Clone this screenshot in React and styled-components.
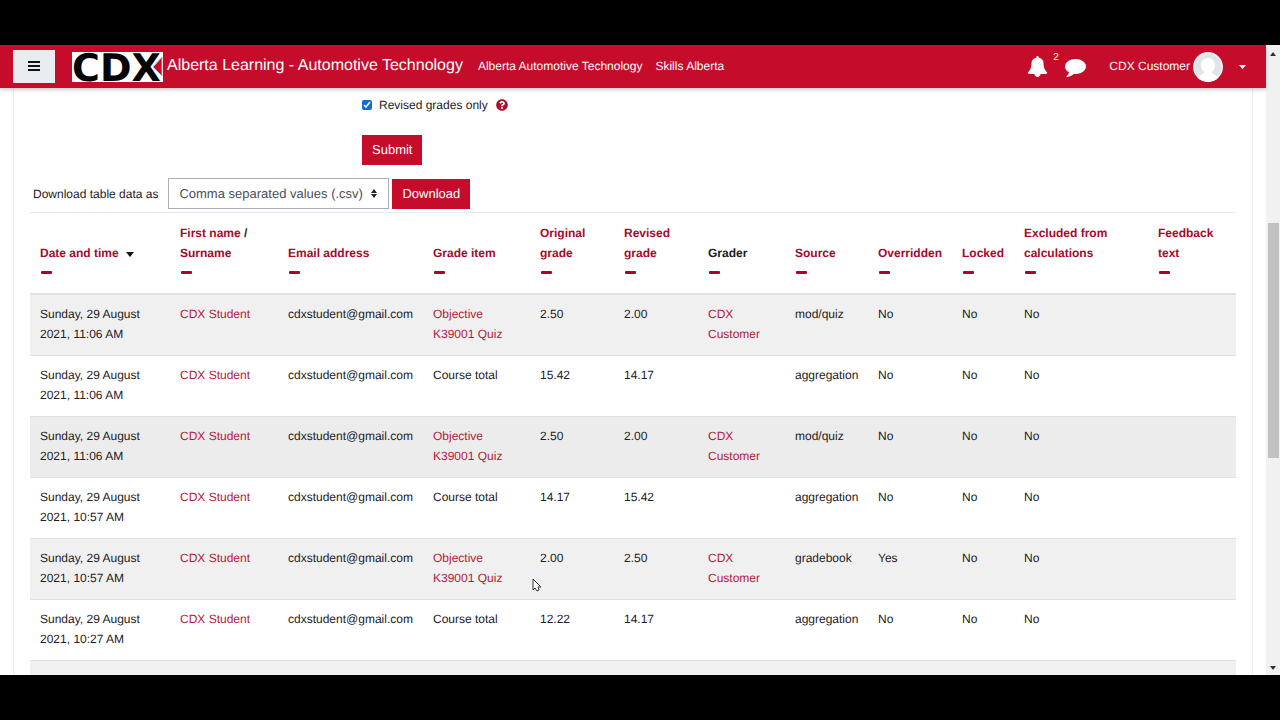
import React from "react";
import styled, { createGlobalStyle, css } from "styled-components";
import { FaQuestionCircle } from "react-icons/fa";

const Global = createGlobalStyle`
  *, *::before, *::after { box-sizing: border-box; }
  html, body { margin: 0; background: #000; }
  body, button, input, select {
    font-family: "Liberation Sans", Arial, sans-serif;
    font-size: 12px;
    line-height: 20px;
    color: #1d2125;
    text-rendering: geometricPrecision;
  }
`;

const Stage = styled.div`
  height: 100vh;
  padding: 45px 0;
  background: #000;
`;

const Browser = styled.div`
  display: flex;
  height: 100%;
  overflow: hidden;
  background: #fff;
`;

const Page = styled.div`
  flex: 1;
  min-width: 0;
  display: flex;
  flex-direction: column;
`;

const Navbar = styled.header`
  position: relative;
  z-index: 1;
  flex: none;
  display: flex;
  align-items: center;
  height: 43px;
  padding: 0 20px 0 13px;
  background: #c60c2b;
  box-shadow: 0 2px 4px rgba(0, 0, 0, 0.2);
`;

const MenuButton = styled.button`
  display: flex;
  align-items: center;
  justify-content: center;
  width: 42px;
  height: 33px;
  padding: 0 0 1px;
  margin-right: 17px;
  border: 0;
  background: #e9ecef;
`;

const Bars = styled.svg`
  width: 12px;
  height: 10px;
`;

const Brand = styled.a`
  display: flex;
  align-items: center;
  gap: 4px;
  color: #fff;
  font-size: 16px;
  text-decoration: none;
  white-space: nowrap;
`;

const NavText = styled.span`
  padding-bottom: 2px;
`;

const Logo = styled.svg`
  display: block;
  width: 91px;
  height: 30px;
  overflow: visible;
`;

const NavLinks = styled.nav`
  display: flex;
  gap: 13px;
  margin-left: 15px;
  padding-bottom: 2px;
`;

const NavLink = styled.a`
  color: #fff;
  text-decoration: none;
  white-space: nowrap;
`;

const UserArea = styled.div`
  display: flex;
  align-items: center;
  margin-left: auto;
`;

const IconButton = styled.button`
  position: relative;
  display: flex;
  padding: 0;
  margin-right: 17px;
  border: 0;
  background: none;
  color: #fff;
`;

const NavIcon = styled.svg`
  width: 21px;
  height: 21px;
  fill: currentColor;
`;

const Badge = styled.span`
  position: absolute;
  top: -4px;
  left: 24px;
  padding: 0 2px;
  border-radius: 2px;
  background: #d00a1e;
  color: #fff;
  font-size: 10px;
  line-height: 12px;
`;

const UserMenu = styled.button`
  display: flex;
  align-items: center;
  gap: 3px;
  padding: 0;
  margin-left: 6px;
  border: 0;
  background: none;
  color: #fff;
`;

const Avatar = styled.svg`
  width: 30px;
  height: 30px;
`;

const Caret = styled.svg`
  width: 7px;
  height: 4px;
  margin-left: 13px;
`;

const Card = styled.main`
  flex: 1;
  min-height: 0;
  overflow: hidden;
  margin: 0 13px;
  padding: 7px 16px 0;
  border: solid #eee;
  border-width: 0 1px;
`;

const FormFields = styled.form`
  display: flex;
  flex-direction: column;
  align-items: flex-start;
  gap: 20px;
  padding-left: 332px;
`;

const CheckRow = styled.div`
  display: flex;
  align-items: center;
`;

const Checkbox = styled.input`
  width: 10px;
  height: 10px;
  margin: 0 7px 0 0;
  accent-color: #0f6cd0;
`;

const HelpButton = styled.button`
  display: flex;
  padding: 0;
  margin-left: 8px;
  border: 0;
  background: none;
  color: #b00b2c;
`;

const PrimaryButton = styled.button`
  height: 30px;
  padding: 0 10px;
  border: 0;
  background: #c60c2b;
  color: #fff;
  font-size: 13px;
`;

const DownloadRow = styled.form`
  display: flex;
  align-items: center;
  margin: 13px 0 3px 3px;
`;

const SelectWrap = styled.span`
  position: relative;
  display: flex;
  margin: 0 3px 0 10px;
`;

const Select = styled.select`
  appearance: none;
  width: 221px;
  height: 31px;
  padding: 0 24px 0 10px;
  border: 1px solid #a9afb4;
  border-radius: 0;
  background: #fff;
  color: #495057;
  font-size: 13px;
`;

const SelectArrows = styled.svg`
  position: absolute;
  top: 11px;
  right: 12px;
  width: 6px;
  height: 9px;
  pointer-events: none;
`;

const Table = styled.table`
  width: 100%;
  table-layout: fixed;
  border-collapse: separate;
  border-spacing: 0;
  text-align: left;
`;

const HeadCell = styled.th`
  padding: 10px 0 10px 10px;
  border-top: 1px solid #e6e8ea;
  border-bottom: 1px solid #dee2e6;
  vertical-align: bottom;
  font-weight: bold;
`;

const Row = styled.tr`
  background: ${(p) => (p.$shade ? "#f0f0f0" : "#fff")};
  ${(p) => p.$hover && css`background: #ececec;`}
`;

const Cell = styled.td`
  height: 61px;
  padding: 9px 0 10px 10px;
  border-top: 1px solid #dee2e6;
  vertical-align: top;
`;

const TableLink = styled.a`
  color: ${(p) => (p.$strong ? "#a8082c" : "#b5183a")};
  text-decoration: none;
`;

const SortArrow = styled.svg`
  width: 8px;
  height: 5px;
  margin-left: 7px;
`;

const Collapse = styled.button`
  display: flex;
  align-items: center;
  height: 20px;
  padding: 0 1px 2px;
  border: 0;
  background: none;
`;

const Dash = styled.span`
  width: 11px;
  height: 3px;
  border-radius: 1px;
  background: #a8032b;
`;

const Scrollbar = styled.div`
  flex: none;
  display: flex;
  flex-direction: column;
  align-items: center;
  width: 14px;
  padding: 7px 0 5px;
  background: #f1f1f1;
`;

const ScrollArrow = styled.svg`
  flex: none;
  width: 6px;
  height: 4px;
`;

const Track = styled.div`
  flex: 1;
  display: flex;
  flex-direction: column;
  width: 11px;
`;

const TrackPart = styled.div`
  flex: ${(p) => p.$share};
  background: ${(p) => (p.$thumb ? "#c1c1c1" : "none")};
`;

const Pointer = styled.svg`
  position: absolute;
  left: 532px;
  top: 578px;
  width: 9px;
  height: 14px;
`;

const columns = [
  { label: ["Date and time"], width: 140, sorted: true },
  { label: ["First name", "Surname"], width: 108, slash: true },
  { label: ["Email address"], width: 145 },
  { label: ["Grade item"], width: 107 },
  { label: ["Original", "grade"], width: 84 },
  { label: ["Revised", "grade"], width: 84 },
  { label: ["Grader"], width: 87, plain: true },
  { label: ["Source"], width: 83 },
  { label: ["Overridden"], width: 84 },
  { label: ["Locked"], width: 62 },
  { label: ["Excluded from", "calculations"], width: 134 },
  { label: ["Feedback", "text"], width: 88 },
];

const rows = [
  { time: "11:06 AM", quiz: true, from: "2.50", to: "2.00", source: "mod/quiz", over: "No" },
  { time: "11:06 AM", from: "15.42", to: "14.17", source: "aggregation", over: "No" },
  { time: "11:06 AM", quiz: true, from: "2.50", to: "2.00", source: "mod/quiz", over: "No", hover: true },
  { time: "10:57 AM", from: "14.17", to: "15.42", source: "aggregation", over: "No" },
  { time: "10:57 AM", quiz: true, from: "2.00", to: "2.50", source: "gradebook", over: "Yes" },
  { time: "10:27 AM", from: "12.22", to: "14.17", source: "aggregation", over: "No" },
];

function BellIcon() {
  return (
    <NavIcon viewBox="0 0 1792 1792" aria-hidden="true">
      <path d="M1728 1408q0 52-38 90t-90 38h-448q0 106-75 181t-181 75-181-75-75-181h-448q-52 0-90-38t-38-90q50-42 91-88t85-119.5 74.5-158.500 50-206 19.500-260q0-152 117-282.500t307-158.500q-8-19-8-39 0-40 28-68t68-28 68 28 28 68q0 20-8 39 190 28 307 158.500t117 282.500q0 139 19.500 260t50 206 74.500 158.500 85 119.500 91 88z" />
    </NavIcon>
  );
}

function CommentIcon() {
  return (
    <NavIcon viewBox="0 0 1792 1792" aria-hidden="true">
      <path d="M1792 896q0 174-120 321.500t-326 233-450 85.500q-70 0-145-8-198 175-460 242-49 14-114 22-17 2-30.500-9t-17.500-29v-1q-3-4-.5-12t2-10 4.500-9.500l6-9 7-8.500 8-9q7-8 31-34.500t34.500-38 31-39.500 32.500-51 27-59 26-76q-157-89-247.500-220t-90.500-281q0-130 71-248.500t191-204.500 286-136.500 348-50.500q244 0 450 85.500t326 233 120 321.500z" />
    </NavIcon>
  );
}

function ColumnHead({ column }) {
  return (
    <HeadCell scope="col">
      {column.label.map((line, i) => (
        <div key={line}>
          {column.plain ? line : <TableLink $strong href="#sort">{line}</TableLink>}
          {column.slash && i === 0 && " /"}
          {column.sorted && (
            <SortArrow viewBox="0 0 8 5" aria-hidden="true"><path d="M0 0h8L4 5z" fill="#111" /></SortArrow>
          )}
        </div>
      ))}
      <Collapse type="button" aria-label={`Hide ${column.label.join(" ")}`}><Dash /></Collapse>
    </HeadCell>
  );
}

function GradeRow({ row }) {
  return (
    <Row $shade={row.quiz} $hover={row.hover}>
      <Cell>Sunday, 29 August<br />2021, {row.time}</Cell>
      <Cell><TableLink href="#student">CDX Student</TableLink></Cell>
      <Cell>cdxstudent@gmail.com</Cell>
      <Cell>
        {row.quiz ? <TableLink href="#quiz">Objective<br />K39001 Quiz</TableLink> : "Course total"}
      </Cell>
      <Cell>{row.from}</Cell>
      <Cell>{row.to}</Cell>
      <Cell>{row.quiz && <TableLink href="#grader">CDX<br />Customer</TableLink>}</Cell>
      <Cell>{row.source}</Cell>
      <Cell>{row.over}</Cell>
      <Cell>No</Cell>
      <Cell>No</Cell>
      <Cell />
    </Row>
  );
}

export default function App() {
  return (
    <Stage>
      <Global />
      <Browser>
        <Page>
          <Navbar>
            <MenuButton type="button" aria-label="Side panel">
              <Bars viewBox="0 0 12 10" aria-hidden="true"><path d="M0 0h12v2H0zM0 4h12v2H0zM0 8h12v2H0z" fill="#111" /></Bars>
            </MenuButton>
            <Brand href="#home">
              <Logo viewBox="0 0 91 30" role="img" aria-label="CDX">
                <rect width="91" height="30" fill="#fff" />
                <path d="M90 5v19l-9-9z" fill="#c60c2b" stroke="#bbb" />
                <text x="0" y="29" fontFamily="DejaVu Sans" fontWeight="bold" fontSize="38" fill="#050505">CDX</text>
              </Logo>
              <NavText>Alberta Learning - Automotive Technology</NavText>
            </Brand>
            <NavLinks>
              <NavLink href="#aat">Alberta Automotive Technology</NavLink>
              <NavLink href="#skills">Skills Alberta</NavLink>
            </NavLinks>
            <UserArea>
              <IconButton type="button" aria-label="Notifications"><BellIcon /><Badge>2</Badge></IconButton>
              <IconButton type="button" aria-label="Messages"><CommentIcon /></IconButton>
              <UserMenu type="button">
                <NavText>CDX Customer</NavText>
                <Avatar viewBox="0 0 30 30" aria-hidden="true">
                  <clipPath id="round"><circle cx="15" cy="15" r="15" /></clipPath>
                  <g clipPath="url(#round)">
                    <rect width="30" height="30" fill="#e1e3e4" />
                    <path d="M15 6c-4 0-7 3-7 7 0 3 1 5 3 7-1 3-5 3-7 6v4h22v-4c-2-3-6-3-7-6 2-2 3-4 3-7 0-4-3-7-7-7z" fill="#fff" />
                    <circle cx="15" cy="15" r="14" fill="none" stroke="#f4f4f4" strokeWidth="1" />
                  </g>
                </Avatar>
                <Caret viewBox="0 0 7 4" aria-hidden="true"><path d="M0 0h7L3.500 4z" fill="#fff" /></Caret>
              </UserMenu>
            </UserArea>
          </Navbar>
          <Card>
            <FormFields>
              <CheckRow>
                <Checkbox id="revised" type="checkbox" defaultChecked />
                <label htmlFor="revised">Revised grades only</label>
                <HelpButton type="button" aria-label="Help"><FaQuestionCircle /></HelpButton>
              </CheckRow>
              <PrimaryButton type="button">Submit</PrimaryButton>
            </FormFields>
            <DownloadRow>
              <label htmlFor="format">Download table data as</label>
              <SelectWrap>
                <Select id="format"><option>Comma separated values (.csv)</option></Select>
                <SelectArrows viewBox="0 0 6 9" aria-hidden="true"><path d="M0 4h6L3 0zM0 5h6L3 9z" fill="#222" /></SelectArrows>
              </SelectWrap>
              <PrimaryButton type="button">Download</PrimaryButton>
            </DownloadRow>
            <Table>
              <colgroup>{columns.map((c) => <col key={c.label[0]} width={c.width} />)}</colgroup>
              <thead><tr>{columns.map((c) => <ColumnHead key={c.label[0]} column={c} />)}</tr></thead>
              <tbody>
                {rows.map((row, i) => <GradeRow key={i} row={row} />)}
                <Row $shade><Cell colSpan={12} /></Row>
              </tbody>
            </Table>
          </Card>
        </Page>
        <Scrollbar aria-hidden="true">
          <ScrollArrow viewBox="0 0 6 4"><path d="M0 4h6L3 0z" fill="#333" /></ScrollArrow>
          <Track>
            <TrackPart $share={167} />
            <TrackPart $share={235} $thumb />
            <TrackPart $share={208} />
          </Track>
          <ScrollArrow viewBox="0 0 6 4"><path d="M0 0h6L3 4z" fill="#333" /></ScrollArrow>
        </Scrollbar>
      </Browser>
      <Pointer viewBox="0 0 9 14" aria-hidden="true">
        <path d="M1 1v11l2-2 2 3 2-1-1-3h3z" fill="#fff" stroke="#333" />
      </Pointer>
    </Stage>
  );
}
